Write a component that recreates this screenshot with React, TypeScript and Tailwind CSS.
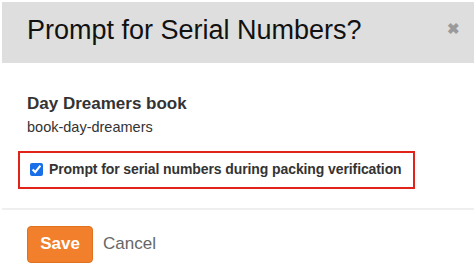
const App = () => {
    return (
        <div className="w-[474px] h-[277px] bg-white overflow-hidden pl-[2px] pt-[2px]" style={{ fontFamily: '"Liberation Sans", Arial, sans-serif' }}>
            <div className="h-[61px] bg-[#dedede] flex items-center justify-between pl-[25px] pr-[14px]">
                <h1 className="text-[27px] text-[#111] leading-none pb-[5px]">Prompt for Serial Numbers?</h1>
                <span className="text-[#9a9a9a] text-[15px] font-bold leading-none pb-[8px]">✖</span>
            </div>

            <div className="pl-[25px] pt-[32px]">
                <div className="text-[17px] font-bold text-[#333] leading-none">Day Dreamers book</div>
                <div className="text-[14.5px] text-[#333] leading-none mt-[8px]">book-day-dreamers</div>
            </div>

            <div className="ml-[16px] mt-[16px] w-[397px] h-[38px] border-2 border-[#e2231a] flex items-center pl-[10px] gap-[6px]">
                <input type="checkbox" defaultChecked className="w-[13px] h-[13px] accent-[#1a6fe8] m-0 shrink-0" />
                <span className="text-[14px] tracking-[-0.1px] font-bold text-[#333] whitespace-nowrap">Prompt for serial numbers during packing verification</span>
            </div>

            <div className="h-[2px] bg-[#efefef] mt-[19px]"></div>

            <div className="flex items-center pl-[25px] pt-[16px] gap-[10px]">
                <button className="w-[66px] h-[37px] rounded-[4px] bg-[#f17f2b] border border-[#e0711f] text-white font-bold text-[17px]">Save</button>
                <button className="text-[17px] text-[#666]">Cancel</button>
            </div>
        </div>
    );
};

export default App;
